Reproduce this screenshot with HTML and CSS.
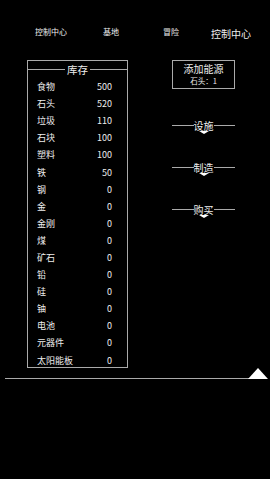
FILE: index.html
```html
<!DOCTYPE html>
<html lang="zh">
<head>
  <meta charset="UTF-8">
  <meta name="viewport" content="width=device-width, initial-scale=1.0">
  <title>控制中心</title>
  <link rel="stylesheet" href="styles.css">
</head>
<body>
  <div class="nav">
    <div class="nav-item">控制中心</div>
    <div class="nav-item">基地</div>
    <div class="nav-item">冒险</div>
    <div class="nav-item current">控制中心</div>
  </div>

  <div class="main">
    <div class="stock">
      <div class="stock-title"><span>库存</span></div>
      <div class="row"><span>食物</span><span>500</span></div>
      <div class="row"><span>石头</span><span>520</span></div>
      <div class="row"><span>垃圾</span><span>110</span></div>
      <div class="row"><span>石块</span><span>100</span></div>
      <div class="row"><span>塑料</span><span>100</span></div>
      <div class="row"><span>铁</span><span>50</span></div>
      <div class="row"><span>钢</span><span>0</span></div>
      <div class="row"><span>金</span><span>0</span></div>
      <div class="row"><span>金刚</span><span>0</span></div>
      <div class="row"><span>煤</span><span>0</span></div>
      <div class="row"><span>矿石</span><span>0</span></div>
      <div class="row"><span>铅</span><span>0</span></div>
      <div class="row"><span>硅</span><span>0</span></div>
      <div class="row"><span>铀</span><span>0</span></div>
      <div class="row"><span>电池</span><span>0</span></div>
      <div class="row"><span>元器件</span><span>0</span></div>
      <div class="row"><span>太阳能板</span><span>0</span></div>
    </div>

    <div class="side">
      <div class="energy-btn">
        <div class="energy-title">添加能源</div>
        <div class="energy-cost">石头：1</div>
      </div>

      <div class="section first">
        <div class="section-head"><span>设施</span></div>
        <div class="chevron"></div>
      </div>
      <div class="section">
        <div class="section-head"><span>制造</span></div>
        <div class="chevron"></div>
      </div>
      <div class="section">
        <div class="section-head"><span>购买</span></div>
        <div class="chevron"></div>
      </div>
    </div>
  </div>

  <div class="bottom-bar">
    <div class="bottom-line"></div>
    <div class="up-arrow"></div>
  </div>
</body>
</html>
```

FILE: styles.css
```css
body {
  margin: 0;
  background-color: #000;
  color: #eee;
  font-family: "Noto Sans CJK SC", "Noto Sans", sans-serif;
}

.nav {
  display: grid;
  grid-template-columns: repeat(4, 60px);
  padding: 24px 0 0 21px;
  height: 14px;
}

.nav-item {
  display: flex;
  justify-content: center;
  align-items: center;
  font-size: 8px;
  height: 14px;
}

.nav-item.current {
  font-size: 10px;
  padding-top: 2px;
}

.main {
  display: flex;
  margin-top: 22px;
  padding-left: 27px;
}

.stock {
  box-sizing: border-box;
  width: 101px;
  height: 308px;
  border: 1px solid #aaa;
  overflow: hidden;
}

.stock-title {
  display: flex;
  align-items: center;
  height: 17px;
  font-size: 10.5px;
}

.stock-title::before,
.stock-title::after {
  content: "";
  flex: 1;
  height: 1px;
  background-color: #aaa;
}

.stock-title span {
  padding: 0 2px;
}

.row {
  display: flex;
  justify-content: space-between;
  align-items: center;
  height: 17.1px;
  padding: 0 15px 0 9px;
  font-size: 9px;
}

.side {
  margin-left: 44px;
  width: 63px;
}

.energy-btn {
  box-sizing: border-box;
  height: 29px;
  border: 1px solid #aaa;
  text-align: center;
  padding-top: 1px;
}

.energy-title {
  font-size: 10px;
  line-height: 14px;
}

.energy-cost {
  font-size: 7.5px;
  line-height: 10px;
}

.section {
  margin-top: 27px;
}

.section.first {
  margin-top: 30px;
}

.section-head {
  display: flex;
  align-items: center;
  height: 12px;
  font-size: 10px;
}

.section-head::before,
.section-head::after {
  content: "";
  flex: 1;
  height: 1px;
  background-color: #aaa;
}

.chevron {
  width: 0;
  height: 0;
  margin: 0 auto;
  border-left: 5px solid transparent;
  border-right: 5px solid transparent;
  border-top: 3px solid #fff;
}

.bottom-bar {
  display: flex;
  align-items: flex-end;
  padding: 0 2px 0 5px;
}

.bottom-line {
  flex: 1;
  height: 1px;
  background-color: #aaa;
}

.up-arrow {
  width: 0;
  height: 0;
  margin-left: -17px;
  border-left: 10px solid transparent;
  border-right: 10px solid transparent;
  border-bottom: 11px solid #fff;
}
```
